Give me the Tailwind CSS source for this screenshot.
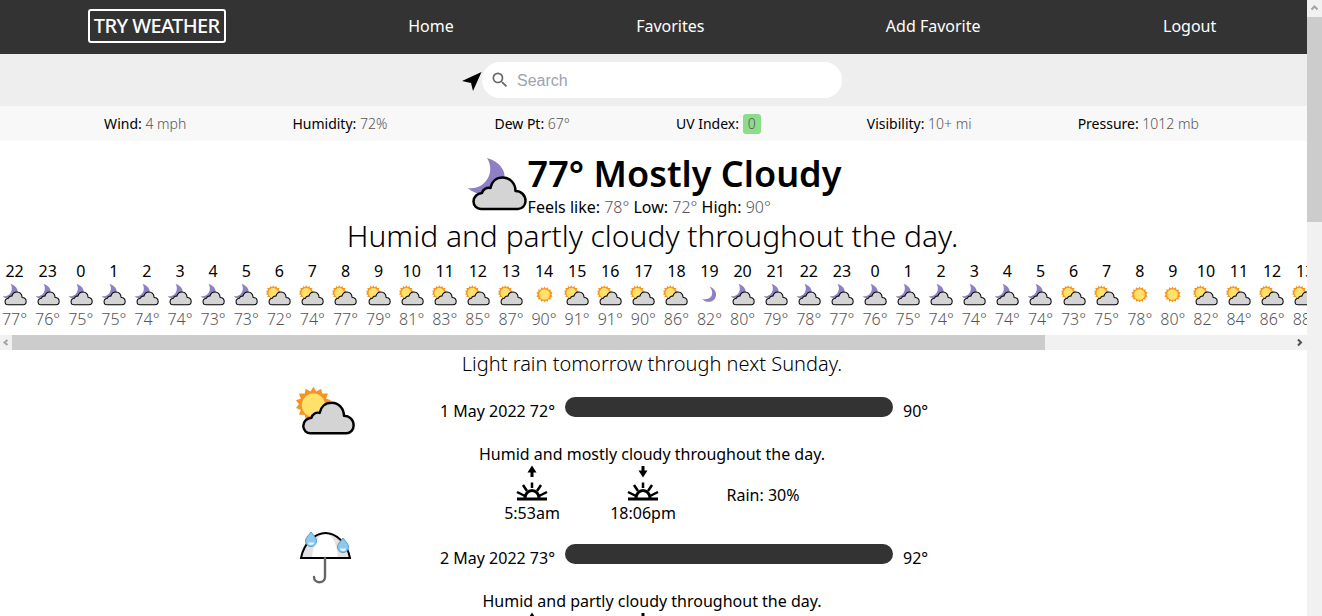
<!DOCTYPE html>
<html lang="en">
<head>
    <meta charset="UTF-8">
    <meta name="viewport" content="width=device-width, initial-scale=1.0">
    <title>Try Weather</title>
    <script src="https://cdn.jsdelivr.net/npm/@tailwindcss/browser@4"></script>
</head>
<body class="bg-white overflow-hidden">
    <!-- Icon sprites -->
    <svg width="0" height="0" class="absolute">
        <defs>
            <symbol id="moon-cloud" viewBox="0 0 64 64">
                <path d="M21 5 C33 8 41 18 38 28 C34 42 14 46 1.500 35 C10 36 16 33 20 28 C25 22 26 13 21 5Z" fill="#8f7fc4"/>
                <path d="M15 56 H52 C56.500 56 59.500 52 59.500 48 C59.500 42 55 38 49.500 38 C49.500 30 43.500 24.500 37 24.500 C30 24.500 25.500 29 24.500 35 C21 34 17 36 16 40 C11 40.500 7.500 44 7.500 48.500 C7.500 53 11 56 15 56Z" fill="#d4d4d4" stroke="#000" stroke-width="2.500" stroke-linejoin="round"/>
            </symbol>
            <symbol id="sun-cloud" viewBox="0 0 64 64">
                <polygon points="18,8 21,13 26,10 27,15 33,15 31,20 36,22 33,26 36,30 31,32 33,37 27,37 26,43 21,40 18,45 15,40 10,43 9,37 3,37 5,32 0,30 3,26 0,22 5,20 3,15 9,15 10,10 15,13" fill="#f7941d"/>
                <circle cx="18" cy="27" r="12" fill="#ffe16b"/>
                <path d="M15 56 H52 C56.500 56 59.500 52 59.500 48 C59.500 42 55 38 49.500 38 C49.500 30 43.500 24.500 37 24.500 C30 24.500 25.500 29 24.500 35 C21 34 17 36 16 40 C11 40.500 7.500 44 7.500 48.500 C7.500 53 11 56 15 56Z" fill="#d4d4d4" stroke="#000" stroke-width="2.500" stroke-linejoin="round"/>
            </symbol>
            <symbol id="sun" viewBox="0 0 40 40">
                <polygon points="20,1 23,6 28,3 29,9 35,8 34,13 39,15 36,20 39,25 34,27 35,32 29,31 28,37 23,34 20,39 17,34 12,37 11,31 5,32 6,27 1,25 4,20 1,15 6,13 5,8 11,9 12,3 17,6" fill="#f7941d"/>
                <circle cx="20" cy="20" r="12.500" fill="#ffe16b"/>
            </symbol>
            <symbol id="moon" viewBox="0 0 40 40">
                <path d="M20 2 C34 6 40 20 32 31 C25 39 10 39 3 31 C15 33 24 28 26 20 C27 13 25 7 20 2Z" fill="#8f7fc4"/>
            </symbol>
            <symbol id="sun-rise" viewBox="0 0 32 36">
                <path d="M16 12 V5" stroke="#000" stroke-width="3"/>
                <polygon points="16,0.500 11.500,7.500 20.500,7.500" fill="#000"/>
                <path d="M9 33 A7 7.500 0 0 1 23 33" fill="none" stroke="#000" stroke-width="3"/>
                <path d="M1 34 H31" stroke="#000" stroke-width="3"/>
                <path d="M16 23 V17.500 M11 26 L7 20 M21 26 L25 20 M9 31 L1 27 M23 31 L31 27" stroke="#000" stroke-width="2.500"/>
            </symbol>
            <symbol id="sun-set" viewBox="0 0 32 36">
                <path d="M16 1 V8" stroke="#000" stroke-width="3"/>
                <polygon points="16,12.500 11.500,5.500 20.500,5.500" fill="#000"/>
                <path d="M9 33 A7 7.500 0 0 1 23 33" fill="none" stroke="#000" stroke-width="3"/>
                <path d="M1 34 H31" stroke="#000" stroke-width="3"/>
                <path d="M16 23 V17.500 M11 26 L7 20 M21 26 L25 20 M9 31 L1 27 M23 31 L31 27" stroke="#000" stroke-width="2.500"/>
            </symbol>
            <symbol id="rain" viewBox="0 0 60 60">
                <path d="M5 31 C8 15 20 6 29.500 6 C39 6 51 15 54 31Z" fill="#e2e2e2"/>
                <path d="M16 31 C17 16 23 7 29.500 6 C36 7 41 16 42 31Z" fill="#fff"/>
                <path d="M5 31 C8 15 20 6 29.500 6 C39 6 51 15 54 31Z" fill="none" stroke="#000" stroke-width="2"/>
                <path d="M29 31 V50 C29 57 18 57 18 50" fill="none" stroke="#666" stroke-width="2.400" stroke-linecap="round"/>
                <path d="M15 5 C12 9 9.500 11 9.500 14 A5.500 5.500 0 0 0 20.500 14 C20.500 11 18 9 15 5Z" fill="#8fc8ec" stroke="#4f9fd6" stroke-width="1"/>
                <path d="M12 15.500 A3 2.500 0 0 0 18 15.500Z" fill="#e8f4fb"/>
                <path d="M47 11 C44 15 41.500 17 41.500 20 A5.500 5.500 0 0 0 52.500 20 C52.500 17 50 15 47 11Z" fill="#8fc8ec" stroke="#4f9fd6" stroke-width="1"/>
                <path d="M44 21.500 A3 2.500 0 0 0 50 21.500Z" fill="#e8f4fb"/>
            </symbol>
        </defs>
    </svg>

    <div class="flex h-[616px] overflow-hidden font-['Noto_Sans',sans-serif] text-black">
        <div class="w-[1307px] shrink-0">
            <!-- Nav -->
            <nav class="h-[54px] pb-[2px] bg-[#333333] flex items-center justify-around text-white">
                <a href="#" class="w-[138px] h-[34px] -ml-[3px] mr-[3px] border-2 border-white rounded-[3px] flex items-center justify-center text-xl font-medium tracking-[-0.6px]">TRY WEATHER</a>
                <a href="#" class="-ml-[2px] mr-[2px]">Home</a>
                <a href="#" class="-ml-[1px] mr-[1px]">Favorites</a>
                <a href="#" class="-ml-[1px] mr-[1px]">Add Favorite</a>
                <a href="#">Logout</a>
            </nav>

            <!-- Search -->
            <div class="h-[52px] pr-[3px] bg-[#eeeeee] flex items-center justify-center">
                <svg class="w-5 h-5 mt-[1px]" viewBox="0 0 20 20"><polygon points="19.500,1 0,10 9,12 11,20" fill="#000"/></svg>
                <div class="w-[360px] h-9 bg-white rounded-full flex items-center pl-2">
                    <svg class="w-5 h-5" viewBox="0 0 24 24"><path fill="#666" d="M15.500 14h-.79l-.28-.27A6.470 6.470 0 0 0 16 9.500 6.500 6.500 0 1 0 9.500 16c1.610 0 3.090-.59 4.230-1.570l.27.28v.79l5 4.990L20.490 19l-4.990-5zm-6 0C7.010 14 5 11.990 5 9.500S7.010 5 9.500 5 14 7.010 14 9.500 11.990 14 9.500 14z"/></svg>
                    <span class="ml-[7px] pt-[1px] text-base text-[#9ca3af] font-['Liberation_Sans',sans-serif]">Search</span>
                </div>
            </div>

            <!-- Current stats -->
            <div class="h-[35px] pt-[1px] pr-[2px] bg-[#f8f8f8] flex items-center justify-evenly text-sm font-light text-[#555555]">
                <div class="-ml-[2px]"><span class="text-black font-normal">Wind:</span> 4 mph</div>
                <div class="mr-[1px]"><span class="text-black font-normal">Humidity:</span> 72%</div>
                <div><span class="text-black font-normal">Dew Pt:</span> 67°</div>
                <div><span class="text-black font-normal">UV Index:</span> <span class="inline-block px-[5px] bg-[#8cdc8a] rounded-[3px]">0</span></div>
                <div><span class="text-black font-normal">Visibility:</span> 10+ mi</div>
                <div><span class="text-black font-normal">Pressure:</span> 1012 mb</div>
            </div>

            <!-- Current conditions -->
            <div class="flex justify-center pt-[12px] h-[64px]">
                <svg class="w-16 h-16 -mr-[2px]"><use href="#moon-cloud"/></svg>
                <div>
                    <h1 class="text-[36px] leading-[42px] font-semibold">77° Mostly Cloudy</h1>
                    <p class="mt-[1px] leading-[22px]">Feels like: <span class="font-light text-[#555555]">78°</span> Low: <span class="font-light text-[#555555]">72°</span> High: <span class="font-light text-[#555555]">90°</span></p>
                </div>
            </div>
            <p class="w-[1305px] mt-[11px] text-center text-[30px] leading-[40px] font-light">Humid and partly cloudy throughout the day.</p>

            <!-- Hourly strip -->
            <div id="hours" class="flex h-[75px] mt-[4px] -ml-[2px] overflow-hidden text-center"></div>

            <!-- Strip scrollbar -->
            <div class="h-[15px] bg-[#f1f1f1] flex items-center">
                <svg class="w-3 h-[15px] shrink-0" viewBox="0 0 12 15"><path d="M7.500 5 L4.500 7.500 L7.500 10" fill="none" stroke="#a3a3a3" stroke-width="2"/></svg>
                <div class="w-[1033px] h-[15px] bg-[#cccccc]"></div>
                <svg class="ml-auto w-[15px] h-[15px]" viewBox="0 0 15 15"><path d="M6 4.500 L9 7.500 L6 10.500" fill="none" stroke="#505050" stroke-width="2"/></svg>
            </div>

            <p class="w-[1304px] text-center text-xl leading-[27px] font-light">Light rain tomorrow through next Sunday.</p>

            <!-- Daily forecast -->
            <div class="mt-[2px]">
                <div class="h-[147px]">
                    <div class="ml-[296px] h-[62px] flex items-center">
                        <svg class="w-[62px] h-[62px] shrink-0"><use href="#sun-cloud"/></svg>
                        <div class="w-[197px] text-right pt-[2px]">1 May 2022 72°</div>
                        <div class="w-[328px] h-5 ml-[10px] -mt-[7px] rounded-full bg-[#333333]"></div>
                        <div class="ml-[10px] pt-[2px]">90°</div>
                    </div>
                    <p class="w-[1304px] mt-[2px] text-center leading-[22px]">Humid and mostly cloudy throughout the day.</p>
                    <div class="ml-[476.500px] flex leading-6">
                        <div class="w-[111px] flex flex-col items-center">
                            <svg class="w-8 h-9"><use href="#sun-rise"/></svg>
                            <span>5:53am</span>
                        </div>
                        <div class="w-[111px] flex flex-col items-center">
                            <svg class="w-8 h-9"><use href="#sun-set"/></svg>
                            <span>18:06pm</span>
                        </div>
                        <div class="ml-[28px] pt-[18px]">Rain: 30%</div>
                    </div>
                </div>
                <div>
                    <div class="ml-[296px] h-[62px] flex items-center">
                        <svg class="w-[60px] h-[60px] shrink-0"><use href="#rain"/></svg>
                        <div class="w-[199px] text-right pt-[2px]">2 May 2022 73°</div>
                        <div class="w-[328px] h-5 ml-[10px] -mt-[7px] rounded-full bg-[#333333]"></div>
                        <div class="ml-[10px] pt-[2px]">92°</div>
                    </div>
                    <p class="w-[1304px] mt-[2px] text-center leading-[22px]">Humid and partly cloudy throughout the day.</p>
                    <div class="ml-[476.500px] flex">
                        <div class="w-[111px] flex flex-col items-center">
                            <svg class="w-8 h-9"><use href="#sun-rise"/></svg>
                        </div>
                        <div class="w-[111px] flex flex-col items-center">
                            <svg class="w-8 h-9"><use href="#sun-set"/></svg>
                        </div>
                    </div>
                </div>
            </div>
        </div>

        <!-- Page scrollbar -->
        <div class="w-[15px] shrink-0 bg-[#f1f1f1] flex flex-col">
            <svg class="w-[15px] h-[17px] shrink-0" viewBox="0 0 15 17"><path d="M4.500 9.500 L7.500 6.500 L10.500 9.500" fill="none" stroke="#a3a3a3" stroke-width="2"/></svg>
            <div class="h-[205px] bg-[#cccccc]"></div>
        </div>
    </div>

    <script>
        // Hourly forecast strip
        const hours = [22,23,0,1,2,3,4,5,6,7,8,9,10,11,12,13,14,15,16,17,18,19,20,21,22,23,0,1,2,3,4,5,6,7,8,9,10,11,12,13];
        const temps = [77,76,75,75,74,74,73,73,72,74,77,79,81,83,85,87,90,91,91,90,86,82,80,79,78,77,76,75,74,74,74,74,73,75,78,80,82,84,86,88];

        function iconFor(i) {
            if (i === 16 || i === 34 || i === 35) return 'sun';
            if (i === 21) return 'moon';
            if ((i >= 8 && i <= 20) || i === 32 || i === 33 || i >= 36) return 'sun-cloud';
            return 'moon-cloud';
        }

        document.getElementById('hours').innerHTML = hours.map((h, i) => {
            const icon = iconFor(i);
            const size = icon === 'sun-cloud' || icon === 'moon-cloud' ? 'w-[26px] h-[26px]' : 'w-[17px] h-[17px] mt-[4px] mb-[5px]';
            return `<div class="w-[33.100px] shrink-0 flex flex-col items-center">
                <span class="leading-[22px]">${h}</span>
                <svg class="${size}"><use href="#${icon}"/></svg>
                <span class="leading-[22px] font-light text-[#555555]">${temps[i]}°</span>
            </div>`;
        }).join('');
    </script>
</body>
</html>
